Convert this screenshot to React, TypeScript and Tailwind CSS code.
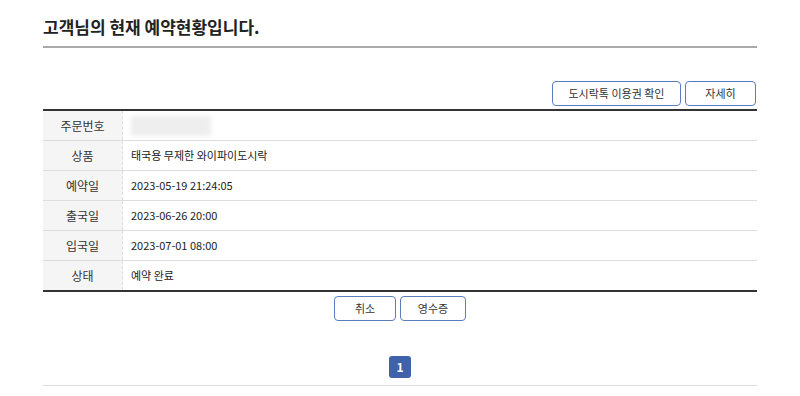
const rows: { label: string; value: string }[] = [
  { label: '상품', value: '태국용 무제한 와이파이도시락' },
  { label: '예약일', value: '2023-05-19 21:24:05' },
  { label: '출국일', value: '2023-06-26 20:00' },
  { label: '입국일', value: '2023-07-01 08:00' },
  { label: '상태', value: '예약 완료' },
];

function OutlineButton({ children, className = '' }: { children: React.ReactNode; className?: string }) {
  return (
    <button
      className={`h-[25px] rounded-[4px] border border-[#5b7dbf] bg-white text-[11px] text-[#333] ${className}`}
    >
      {children}
    </button>
  );
}

export default function App() {
  return (
    <div
      className="w-[800px] h-[396px] bg-white overflow-hidden"
      style={{ fontFamily: '"Noto Sans CJK KR", "Noto Sans", sans-serif' }}
    >
      <div className="mx-[43px] pt-[14px]">
        <h1 className="text-[17px] font-bold text-[#222] leading-[26px] pb-[6px] border-b-2 border-[#aaa]">
          고객님의 현재 예약현황입니다.
        </h1>

        <div className="flex justify-end gap-[4px] mt-[33px] pr-[1px]">
          <OutlineButton className="w-[129px]">도시락톡 이용권 확인</OutlineButton>
          <OutlineButton className="w-[71px]">자세히</OutlineButton>
        </div>

        <div className="mt-[3px] border-t-2 border-b-2 border-[#333]">
          <div className="flex h-[30px] border-b border-[#ddd]">
            <div className="w-[80px] shrink-0 flex items-center justify-center bg-[#f5f5f5] border-r border-dashed border-[#ddd] text-[12px] text-[#333]">
              주문번호
            </div>
            <div className="flex items-center pl-[8px]">
              <div className="w-[80px] h-[20px] bg-[#eeeeee] blur-[2px]" />
            </div>
          </div>
          {rows.map((row, i) => {
            const last = i === rows.length - 1;
            return (
              <div
                key={row.label}
                className={`flex ${last ? 'h-[29px]' : 'h-[30px] border-b border-[#ddd]'}`}
              >
                <div className="w-[80px] shrink-0 flex items-center justify-center bg-[#f5f5f5] border-r border-dashed border-[#ddd] text-[12px] text-[#333]">
                  {row.label}
                </div>
                <div className="flex items-center pl-[8px] text-[11px] text-[#222]">{row.value}</div>
              </div>
            );
          })}
        </div>

        <div className="flex justify-center gap-[4px] mt-[4px]">
          <OutlineButton className="w-[62px]">취소</OutlineButton>
          <OutlineButton className="w-[66px]">영수증</OutlineButton>
        </div>

        <div className="flex justify-center mt-[35px] pb-[7px] border-b border-[#ddd]">
          <span className="w-[22px] h-[22px] rounded-[3px] bg-[#3f62ab] text-white text-[12px] font-bold flex items-center justify-center">
            1
          </span>
        </div>
      </div>
    </div>
  );
}
